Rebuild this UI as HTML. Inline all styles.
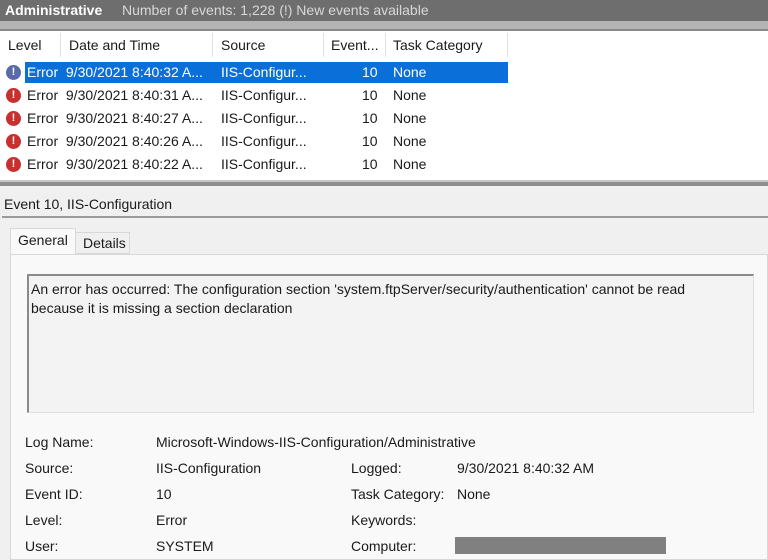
<!DOCTYPE html>
<html><head><style>
*{margin:0;padding:0;box-sizing:border-box}
body{width:768px;height:560px;overflow:hidden;background:#f0f0f0;font-family:"Liberation Sans",sans-serif;font-size:14px;color:#1a1a1a;position:relative;letter-spacing:0}
.a{position:absolute;white-space:nowrap}
.ic{position:absolute;width:15px;height:15px;border-radius:50%;background:#c8302f;color:#fff;font-weight:bold;font-size:11px;text-align:center;line-height:15px;letter-spacing:0}
</style></head><body>
<div class="a" style="left:0;top:0;width:768px;height:21px;background:#6e6e6e"></div>
<div class="a" style="left:5px;top:2px;color:#fff;font-weight:bold">Administrative</div>
<div class="a" style="left:122px;top:2px;color:#d8d8d8">Number of events: 1,228 (!) New events available</div>
<div class="a" style="left:0;top:21px;width:768px;height:10px;background:#b4b4b4;border-bottom:2px solid #8a8a8a"></div>
<div class="a" style="left:0;top:31px;width:768px;height:150px;background:#fff"></div>
<div class="a" style="left:60px;top:33px;width:1px;height:24px;background:#e0e0e0"></div>
<div class="a" style="left:212px;top:33px;width:1px;height:24px;background:#e0e0e0"></div>
<div class="a" style="left:323px;top:33px;width:1px;height:24px;background:#e0e0e0"></div>
<div class="a" style="left:385px;top:33px;width:1px;height:24px;background:#e0e0e0"></div>
<div class="a" style="left:507px;top:33px;width:1px;height:24px;background:#e0e0e0"></div>
<div class="a" style="left:8px;top:37px">Level</div>
<div class="a" style="left:69px;top:37px">Date and Time</div>
<div class="a" style="left:221px;top:37px">Source</div>
<div class="a" style="left:331px;top:37px">Event...</div>
<div class="a" style="left:393px;top:37px">Task Category</div>
<div class="a" style="left:25px;top:62px;width:483px;height:21px;background:#0a6fd8"></div>
<div class="ic" style="left:6px;top:65px;background:#5a6aa8">!</div>
<div class="a" style="left:27px;top:64px;color:#fff">Error&nbsp; 9/30/2021 8:40:32 A...</div>
<div class="a" style="left:221px;top:64px;color:#fff">IIS-Configur...</div>
<div class="a" style="left:362px;top:64px;color:#fff">10</div>
<div class="a" style="left:393px;top:64px;color:#fff">None</div>
<div class="ic" style="left:6px;top:88px">!</div>
<div class="a" style="left:27px;top:87px">Error&nbsp; 9/30/2021 8:40:31 A...</div><div class="a" style="left:221px;top:87px">IIS-Configur...</div><div class="a" style="left:362px;top:87px">10</div><div class="a" style="left:393px;top:87px">None</div>
<div class="ic" style="left:6px;top:111px">!</div>
<div class="a" style="left:27px;top:110px">Error&nbsp; 9/30/2021 8:40:27 A...</div><div class="a" style="left:221px;top:110px">IIS-Configur...</div><div class="a" style="left:362px;top:110px">10</div><div class="a" style="left:393px;top:110px">None</div>
<div class="ic" style="left:6px;top:134px">!</div>
<div class="a" style="left:27px;top:133px">Error&nbsp; 9/30/2021 8:40:26 A...</div><div class="a" style="left:221px;top:133px">IIS-Configur...</div><div class="a" style="left:362px;top:133px">10</div><div class="a" style="left:393px;top:133px">None</div>
<div class="ic" style="left:6px;top:157px">!</div>
<div class="a" style="left:27px;top:156px">Error&nbsp; 9/30/2021 8:40:22 A...</div><div class="a" style="left:221px;top:156px">IIS-Configur...</div><div class="a" style="left:362px;top:156px">10</div><div class="a" style="left:393px;top:156px">None</div>
<div class="a" style="left:0;top:180px;width:768px;height:2px;background:#c8c8c8"></div>
<div class="a" style="left:0;top:182px;width:768px;height:4px;background:#8e8e8e"></div>
<div class="a" style="left:4px;top:196px">Event 10, IIS-Configuration</div>
<div class="a" style="left:2px;top:216px;width:766px;height:2px;background:#9a9a9a"></div>
<div class="a" style="left:10px;top:228px;width:66px;height:27px;background:#f9f9f9;border:1px solid #d8d8d8;border-bottom:none"></div>
<div class="a" style="left:18px;top:232px">General</div>
<div class="a" style="left:76px;top:232px;width:54px;height:22px;border:1px solid #d8d8d8;border-left:none;background:#f0f0f0"></div>
<div class="a" style="left:83px;top:235px">Details</div>
<div class="a" style="left:10px;top:254px;width:758px;height:306px;background:#f9f9f9;border:1px solid #d8d8d8"></div>
<div class="a" style="left:27px;top:274px;width:727px;height:139px;background:#f3f3f3;border-top:2px solid #8a8a8a;border-left:2px solid #8a8a8a;border-right:1px solid #e0e0e0;border-bottom:1px solid #e0e0e0"></div>
<div class="a" style="left:31px;top:280px;line-height:19px">An error has occurred: The configuration section 'system.ftpServer/security/authentication' cannot be read<br>because it is missing a section declaration</div>
<div class="a" style="left:25px;top:434px">Log Name:</div><div class="a" style="left:156px;top:434px">Microsoft-Windows-IIS-Configuration/Administrative</div>
<div class="a" style="left:25px;top:460px">Source:</div><div class="a" style="left:156px;top:460px">IIS-Configuration</div>
<div class="a" style="left:351px;top:460px">Logged:</div><div class="a" style="left:457px;top:460px">9/30/2021 8:40:32 AM</div>
<div class="a" style="left:25px;top:486px">Event ID:</div><div class="a" style="left:156px;top:486px">10</div>
<div class="a" style="left:351px;top:486px">Task Category:</div><div class="a" style="left:457px;top:486px">None</div>
<div class="a" style="left:25px;top:512px">Level:</div><div class="a" style="left:156px;top:512px">Error</div>
<div class="a" style="left:351px;top:512px">Keywords:</div>
<div class="a" style="left:25px;top:538px">User:</div><div class="a" style="left:156px;top:538px">SYSTEM</div>
<div class="a" style="left:351px;top:538px">Computer:</div>
<div class="a" style="left:455px;top:537px;width:211px;height:17px;background:#808080"></div>
</body></html>
